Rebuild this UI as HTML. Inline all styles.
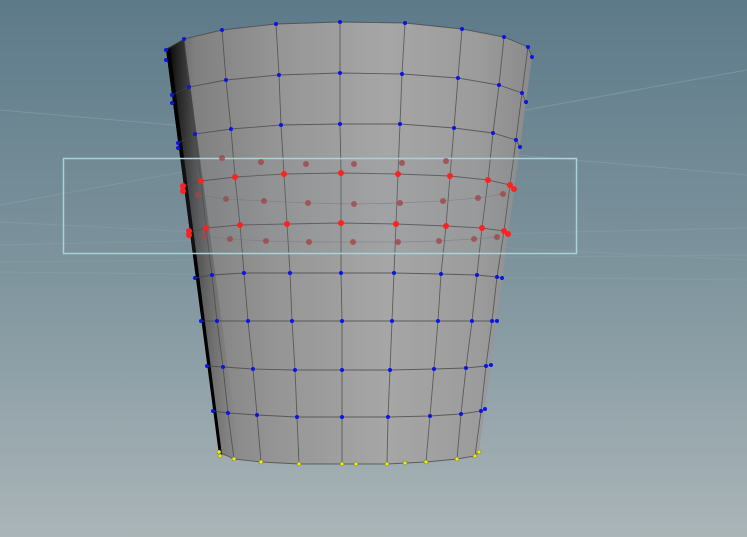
<!DOCTYPE html>
<html><head><meta charset="utf-8"><style>
html,body{margin:0;padding:0;width:747px;height:537px;overflow:hidden}
</style></head><body>
<svg width="747" height="537" viewBox="0 0 747 537" xmlns="http://www.w3.org/2000/svg">
<defs>
<linearGradient id="bg" x1="0" y1="0" x2="0" y2="1">
<stop offset="0" stop-color="#5d7a89"/><stop offset="0.5" stop-color="#7e949d"/><stop offset="1" stop-color="#aab5b8"/>
</linearGradient>
<linearGradient id="cup" x1="166" y1="0" x2="532" y2="0" gradientUnits="userSpaceOnUse">
<stop offset="0" stop-color="#555"/><stop offset="0.08" stop-color="#808080"/><stop offset="0.3" stop-color="#959595"/><stop offset="0.6" stop-color="#a6a6a6"/><stop offset="0.85" stop-color="#9c9c9c"/><stop offset="1" stop-color="#8a8a8a"/>
</linearGradient>
<linearGradient id="edge" x1="166" y1="0" x2="240" y2="0" gradientUnits="userSpaceOnUse">
<stop offset="0" stop-color="#000"/><stop offset="0.15" stop-color="#222"/><stop offset="1" stop-color="#777" stop-opacity="0"/>
</linearGradient>
</defs>
<rect width="747" height="537" fill="url(#bg)"/>
<g stroke="#8aa0a8" stroke-width="1" opacity="0.6" fill="none">
<line x1="0" y1="110" x2="747" y2="175"/>
<line x1="0" y1="205" x2="747" y2="70"/>
<line x1="0" y1="245" x2="747" y2="228"/>
<line x1="0" y1="222" x2="747" y2="260"/>
<line x1="0" y1="262" x2="747" y2="255"/>
<line x1="0" y1="272" x2="747" y2="280"/>
</g>
<path d="M166,49 L184,39 L222,30 L276,24 L340,22 L405,23 L462,29 L504,37 L528,47 L532,57 L479,452 L475,456 L457,459 L426,462 L387,464 L342,464 L299,464 L261,462 L234,459 L219,452 Z" fill="url(#cup)"/>
<path d="M166,49 L184,39 L240,458 L219,455 Z" fill="url(#edge)"/>
<path d="M166,49 L170,48 L222,455 L219,455 Z" fill="#000"/>
<g fill="none" stroke="#444" stroke-width="0.9" opacity="0.75">
<polyline points="166,50 184,39 222,30 276,24 340,22 405,23 462,29 504,37 528,47 532,57"/>
<polyline points="172,95 189,87 226,80 279,75 340,73 402,74 458,78 499,85 522,93 526,102"/>
<polyline points="178,143 195,134 231,129 281,125 340,124 400,124 454,128 493,133 516,140 520,147"/>
<polyline points="183,186 201,181 235,177 284,174 341,173 398,174 450,176 488,180 510,185 514,189"/>
<polyline points="189,233 206,228 240,225 287,224 341,223 396,224 446,226 482,228 504,231 508,234"/>
<polyline points="195,278 212,275 244,273 290,273 341,273 394,273 441,274 477,275 497,277 502,278"/>
<polyline points="201,321 217,321 248,321 292,321 342,321 392,321 438,321 472,321 492,321 497,321"/>
<polyline points="207,366 223,367 253,369 295,370 342,370 390,370 434,369 466,368 486,366 491,365"/>
<polyline points="213,411 228,413 257,415 297,417 342,417 388,417 430,416 461,414 481,411 485,409"/>
<polyline points="219,452 234,459 261,462 299,464 342,464 387,464 426,462 457,459 475,456 479,452"/>
<polyline points="184,39 189,87 195,134 201,181 206,228 212,275 217,321 223,367 228,413 234,459"/>
<polyline points="222,30 226,80 231,129 235,177 240,225 244,273 248,321 253,369 257,415 261,462"/>
<polyline points="276,24 279,75 281,125 284,174 287,224 290,273 292,321 295,370 297,417 299,464"/>
<polyline points="340,22 340,73 340,124 341,173 341,223 341,273 342,321 342,370 342,417 342,464"/>
<polyline points="405,23 402,74 400,124 398,174 396,224 394,273 392,321 390,370 388,417 387,464"/>
<polyline points="462,29 458,78 454,128 450,176 446,226 441,274 438,321 434,369 430,416 426,462"/>
<polyline points="504,37 499,85 493,133 488,180 482,228 477,275 472,321 466,368 461,414 457,459"/>
<polyline points="528,47 522,93 516,140 510,185 504,231 497,277 492,321 486,366 481,411 475,456"/>
</g>
<g fill="none" stroke="#6e6e6e" stroke-width="0.8" opacity="0.5">
<polyline points="198,195 226,199 264,201 308,203 354,204 400,203 443,201 478,198 503,194"/>
<polyline points="204,236 230,239 266,241 309,242 353,242 398,242 439,241 474,239 497,237"/>
</g>
<rect x="63.5" y="158.5" width="513" height="95" fill="rgba(120,140,145,0.12)" stroke="#a9d2d6" stroke-width="1.5"/>
<g fill="#a04848" opacity="0.8">
<circle cx="222" cy="158" r="3"/><circle cx="261" cy="162" r="3"/><circle cx="306" cy="164" r="3"/><circle cx="354" cy="164" r="3"/><circle cx="402" cy="163" r="3"/><circle cx="446" cy="161" r="3"/>
<circle cx="198" cy="195" r="3"/><circle cx="226" cy="199" r="3"/><circle cx="264" cy="201" r="3"/><circle cx="308" cy="203" r="3"/><circle cx="354" cy="204" r="3"/><circle cx="400" cy="203" r="3"/><circle cx="443" cy="201" r="3"/><circle cx="478" cy="198" r="3"/><circle cx="503" cy="194" r="3"/>
<circle cx="204" cy="236" r="3"/><circle cx="230" cy="239" r="3"/><circle cx="266" cy="241" r="3"/><circle cx="309" cy="242" r="3"/><circle cx="353" cy="242" r="3"/><circle cx="398" cy="242" r="3"/><circle cx="439" cy="241" r="3"/><circle cx="474" cy="239" r="3"/><circle cx="497" cy="237" r="3"/>
</g>
<g fill="#ff2020">
<circle cx="183" cy="186" r="3"/><circle cx="183" cy="191" r="3"/><circle cx="201" cy="181" r="3"/><circle cx="235" cy="177" r="3"/><circle cx="284" cy="174" r="3"/><circle cx="341" cy="173" r="3"/><circle cx="398" cy="174" r="3"/><circle cx="450" cy="176" r="3"/><circle cx="488" cy="180" r="3"/><circle cx="510" cy="185" r="3"/><circle cx="514" cy="189" r="3"/>
<circle cx="189" cy="231" r="3"/><circle cx="189" cy="235" r="3"/><circle cx="206" cy="228" r="3"/><circle cx="240" cy="225" r="3"/><circle cx="287" cy="224" r="3"/><circle cx="341" cy="223" r="3"/><circle cx="396" cy="224" r="3"/><circle cx="446" cy="226" r="3"/><circle cx="482" cy="228" r="3"/><circle cx="504" cy="231" r="3"/><circle cx="508" cy="234" r="3"/>
</g>
<g fill="#0a14e6">
<circle cx="166" cy="50" r="2"/><circle cx="166" cy="60" r="2"/><circle cx="184" cy="39" r="2"/><circle cx="222" cy="30" r="2"/><circle cx="276" cy="24" r="2"/><circle cx="340" cy="22" r="2"/><circle cx="405" cy="23" r="2"/><circle cx="462" cy="29" r="2"/><circle cx="504" cy="37" r="2"/><circle cx="528" cy="47" r="2"/><circle cx="532" cy="57" r="2"/>
<circle cx="172" cy="95" r="2"/><circle cx="172" cy="103" r="2"/><circle cx="189" cy="87" r="2"/><circle cx="226" cy="80" r="2"/><circle cx="279" cy="75" r="2"/><circle cx="340" cy="73" r="2"/><circle cx="402" cy="74" r="2"/><circle cx="458" cy="78" r="2"/><circle cx="499" cy="85" r="2"/><circle cx="522" cy="93" r="2"/><circle cx="526" cy="102" r="2"/>
<circle cx="178" cy="143" r="2"/><circle cx="178" cy="148" r="2"/><circle cx="195" cy="134" r="2"/><circle cx="231" cy="129" r="2"/><circle cx="281" cy="125" r="2"/><circle cx="340" cy="124" r="2"/><circle cx="400" cy="124" r="2"/><circle cx="454" cy="128" r="2"/><circle cx="493" cy="133" r="2"/><circle cx="516" cy="140" r="2"/><circle cx="520" cy="147" r="2"/>
<circle cx="195" cy="278" r="2"/><circle cx="212" cy="275" r="2"/><circle cx="244" cy="273" r="2"/><circle cx="290" cy="273" r="2"/><circle cx="341" cy="273" r="2"/><circle cx="394" cy="273" r="2"/><circle cx="441" cy="274" r="2"/><circle cx="477" cy="275" r="2"/><circle cx="497" cy="277" r="2"/><circle cx="502" cy="278" r="2"/>
<circle cx="201" cy="321" r="2"/><circle cx="217" cy="321" r="2"/><circle cx="248" cy="321" r="2"/><circle cx="292" cy="321" r="2"/><circle cx="342" cy="321" r="2"/><circle cx="392" cy="321" r="2"/><circle cx="438" cy="321" r="2"/><circle cx="472" cy="321" r="2"/><circle cx="492" cy="321" r="2"/><circle cx="497" cy="321" r="2"/>
<circle cx="207" cy="366" r="2"/><circle cx="223" cy="367" r="2"/><circle cx="253" cy="369" r="2"/><circle cx="295" cy="370" r="2"/><circle cx="342" cy="370" r="2"/><circle cx="390" cy="370" r="2"/><circle cx="434" cy="369" r="2"/><circle cx="466" cy="368" r="2"/><circle cx="486" cy="366" r="2"/><circle cx="491" cy="365" r="2"/>
<circle cx="213" cy="411" r="2"/><circle cx="228" cy="413" r="2"/><circle cx="257" cy="415" r="2"/><circle cx="297" cy="417" r="2"/><circle cx="342" cy="417" r="2"/><circle cx="388" cy="417" r="2"/><circle cx="430" cy="416" r="2"/><circle cx="461" cy="414" r="2"/><circle cx="481" cy="411" r="2"/><circle cx="485" cy="409" r="2"/>
</g>
<g fill="#f0f000" stroke="#555" stroke-width="0.4">
<circle cx="219" cy="452" r="2"/><circle cx="220" cy="456" r="2"/><circle cx="234" cy="459" r="2"/><circle cx="261" cy="462" r="2"/><circle cx="299" cy="464" r="2"/><circle cx="342" cy="464" r="2"/><circle cx="356" cy="464" r="2"/><circle cx="387" cy="464" r="2"/><circle cx="405" cy="463" r="2"/><circle cx="426" cy="462" r="2"/><circle cx="457" cy="459" r="2"/><circle cx="475" cy="456" r="2"/><circle cx="479" cy="452" r="2"/>
</g>
</svg>
</body></html>
